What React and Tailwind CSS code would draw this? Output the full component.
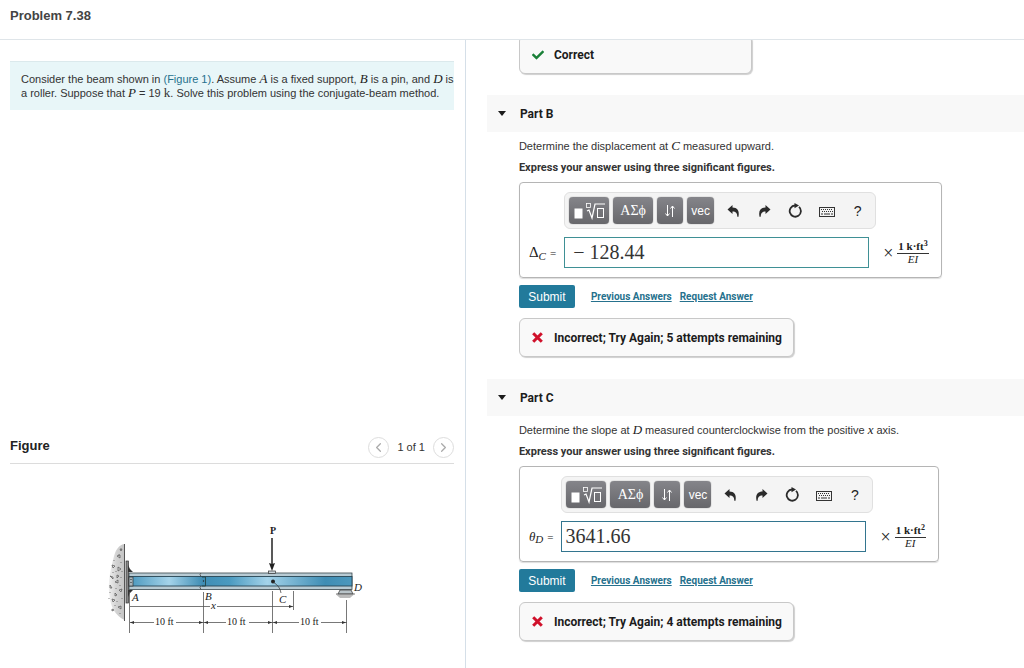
import { useState } from 'react';
import { ChevronLeft, ChevronRight } from 'lucide-react';
import { FaCheck } from 'react-icons/fa';

const parts = [
  {
    id: 'B',
    question: (
      <>Determine the displacement at <Sym>C</Sym> measured upward.</>
    ),
    symbol: 'Δ',
    sub: 'C',
    symbolStyle: 'text-[15px]',
    answer: ' − 128.44',
    power: 3,
    attempts: 5,
    field: 'border-[#3f9095]',
  },
  {
    id: 'C',
    question: (
      <>
        Determine the slope at <Sym>D</Sym> measured counterclockwise from the positive <Sym>x</Sym> axis.
      </>
    ),
    symbol: 'θ',
    sub: 'D',
    symbolStyle: 'text-[13px] italic',
    answer: '3641.66',
    power: 2,
    attempts: 4,
    field: 'border-[#33758f]',
  },
];

/* Inline math variable */
function Sym({ children }) {
  return <i className="font-['Liberation_Serif',serif] text-[13px] leading-none text-[#222]">{children}</i>;
}

function CrossIcon() {
  return (
    <svg className="mr-[11px] size-[11px]" viewBox="0 0 11 11" stroke="#d0112b" strokeWidth="3">
      <path d="M1.200 1.200l8.600 8.600M9.800 1.200L1.200 9.800" />
    </svg>
  );
}

function Feedback({ ok, children, className = '' }) {
  return (
    <div
      className={`flex h-[39px] items-center rounded-md border border-[#c8c8c8] bg-[#f9f9f9] pr-[11px] pl-3 font-['Roboto',sans-serif] text-xs font-bold text-[#1c1c1c] shadow-[1px_1px_1px_#cfcfcf] ${className}`}
    >
      {ok ? <FaCheck className="mr-[10px] size-3 text-[#1a8038]" /> : <CrossIcon />}
      {children}
    </div>
  );
}

function TemplateIcon() {
  return (
    <svg className="h-5 w-8" viewBox="0 0 32 20" fill="none" stroke="#fff">
      <rect x="1.500" y="7.500" width="8" height="10" fill="#fff" stroke="none" />
      <path d="M14 10l2-1 3 8 3-14h10" strokeWidth="1.200" />
      <rect x="13.500" y="2.500" width="4" height="4" strokeWidth="0.8" />
      <rect x="24.500" y="7.500" width="6" height="9" strokeWidth="1" />
    </svg>
  );
}

function UndoIcon({ flip }) {
  return (
    <svg className={flip ? 'h-3 w-[13px] -scale-x-100' : 'h-3 w-[13px]'} viewBox="0 0 13 12" fill="#2b2b2b">
      <path d="M0.500 4.500L5.500 0v2.500c4.500 0 7.300 3 6 9.200h-1.200C10.300 8 8.800 6.500 5.500 6.500V9z" />
    </svg>
  );
}

function ResetIcon() {
  return (
    <svg className="size-[15px]" viewBox="0 0 15 15" fill="none">
      <path d="M11 3.900A5.600 5.600 0 1 1 7 2.500" stroke="#2b2b2b" strokeWidth="1.800" />
      <path d="M6.500 0l4.500 2.500L6.500 5.300z" fill="#2b2b2b" />
    </svg>
  );
}

function KeyboardIcon() {
  return (
    <svg className="mt-0.5 h-[10px] w-4" viewBox="0 0 16 10" fill="none" stroke="#333">
      <rect x="0.500" y="0.500" width="15" height="9" />
      <path d="M2 2.500h12M3 4.500h11" strokeDasharray="1 1" />
      <path d="M2 7h2M5 7h6M12 7h2" />
    </svg>
  );
}

function Toolbar() {
  const dark =
    'flex h-[27px] items-center justify-center rounded bg-linear-to-b from-[#85858a] to-[#67676b] text-white shadow-[0_0_1px_#555]';
  const plain = 'flex w-[31px] items-center justify-center';
  return (
    <div className="col-span-2 col-start-2 flex h-[37px] w-[312px] items-center gap-1 rounded-md border border-[#e0e0e0] bg-[#f4f4f4] pl-1">
      <button type="button" aria-label="Templates" className={`${dark} w-10`}><TemplateIcon /></button>
      <button type="button" className={`${dark} w-10 font-['Liberation_Serif',serif] text-sm`}>ΑΣϕ</button>
      <button type="button" aria-label="Subscript and superscript" className={`${dark} w-[26px]`}>
        <svg className="h-3 w-[10px]" viewBox="0 0 10 12" fill="none" stroke="#fff">
          <path d="M2.500 0v11M0.500 8.500l2 2.500 2-2.500M7.500 12V1M5.500 3.500l2-2.500 2 2.500" />
        </svg>
      </button>
      <button type="button" className={`${dark} w-[27px] text-xs`}>vec</button>
      <div className="flex">
        <button type="button" aria-label="Undo" className={plain}><UndoIcon /></button>
        <button type="button" aria-label="Redo" className={plain}><UndoIcon flip /></button>
        <button type="button" aria-label="Reset" className={plain}><ResetIcon /></button>
        <button type="button" aria-label="Keyboard shortcuts" className={plain}><KeyboardIcon /></button>
        <button type="button" className={`${plain} text-sm text-[#222]`}>?</button>
      </div>
    </div>
  );
}

function Part({ part }) {
  const [answer, setAnswer] = useState(part.answer);
  const fieldId = `answer-${part.id}`;

  return (
    <section className="mb-[22px]">
      <h2 className="flex h-[37px] items-center bg-[#f8f8f8] font-['Roboto',sans-serif] text-xs font-bold text-[#1c1c1c]">
        <span className="mr-[14px] ml-[11px] border-x-4 border-t-5 border-x-transparent border-t-[#1c1c1c]" />
        Part {part.id}
      </h2>
      <div className="flex flex-col items-start pt-1 pl-8 text-[11px]">
        <p className="h-[21px] leading-[21px]">{part.question}</p>
        <p className="h-[21px] font-['Roboto',sans-serif] leading-[21px] font-bold">
          Express your answer using three significant figures.
        </p>

        <div className="mt-1 grid grid-cols-[auto_auto_auto] items-center gap-y-2 rounded-sm border border-[#b5b5b5] py-[9px] pr-3 pl-[9px] shadow-[0_1px_1px_#ddd]">
          <Toolbar />
          <label htmlFor={fieldId} className="pr-2 font-['Liberation_Serif',serif] leading-4 text-[#222]">
            <span className={part.symbolStyle}>{part.symbol}</span>
            <sub className="text-[11px] italic">{part.sub}</sub>
            <span className="ml-1 text-[11px]">=</span>
          </label>
          <input
            id={fieldId}
            value={answer}
            onChange={(e) => setAnswer(e.target.value)}
            className={`h-[31px] w-[305px] border bg-white px-[3px] font-['Liberation_Serif',serif] text-xl text-[#333] outline-none ${part.field}`}
          />
          <div className="flex items-center pl-[14px] font-['Liberation_Serif',serif] text-[11px] leading-[11px] text-[#222]">
            <span className="mr-1 text-lg">×</span>
            <span className="flex flex-col items-center font-bold">
              <span className="border-b border-[#333] px-px">
                1 k·ft<span className="relative -top-1 text-[8px]">{part.power}</span>
              </span>
              <i className="font-normal">EI</i>
            </span>
          </div>
        </div>

        <div className="mt-[7px] flex items-center text-[10px] font-bold text-[#26718d]">
          <button type="button" className="mr-4 h-[23px] w-14 rounded-xs bg-[#227a9b] text-xs font-normal text-white">Submit</button>
          <div className="flex gap-2 font-['Roboto',sans-serif]">
            <a href="#previous" className="underline">Previous Answers</a>
            <a href="#request" className="underline">Request Answer</a>
          </div>
        </div>

        <Feedback className="mt-[10px]">Incorrect; Try Again; {part.attempts} attempts remaining</Feedback>
      </div>
    </section>
  );
}

/* Beam ABCD: fixed at A, pin at B, load P at C, roller at D */
function BeamDiagram() {
  return (
    <svg className="ml-[90px] h-[125px] w-[270px]" viewBox="100 515 270 125" fill="none" role="img" aria-label="Beam diagram">
      <defs>
        <linearGradient id="steel">
          <stop offset="0" stopColor="#4896bc" />
          <stop offset="0.18" stopColor="#a4d3ea" />
          <stop offset="0.33" stopColor="#3f8db4" />
          <stop offset="0.45" stopColor="#4a9ac0" />
          <stop offset="0.62" stopColor="#a4d3ea" />
          <stop offset="0.88" stopColor="#3f8db4" />
          <stop offset="1" stopColor="#4c98bd" />
        </linearGradient>
        <linearGradient id="wall">
          <stop offset="0" stopColor="#f0f0f0" />
          <stop offset="0.5" stopColor="#d2d2d2" />
          <stop offset="1" stopColor="#c4c4c4" />
        </linearGradient>
      </defs>

      {/* wall */}
      <path d="M124.500 544c-6 1-9 6-11 14-3 12-6 24-4 38 1 11 6 20 15 24z" fill="url(#wall)" />
      <path d="M124.500 544v77" stroke="#555" />
      <g stroke="#555" strokeWidth="0.7">
        <path d="M117 556l3-1v3zM120 549h2l-1 2zM112 565l3 1-2 2zM118 567l3 2-3 2zM110 576l3 1v2zM115 582l3-2v3zM119 590l3-1-1 3zM110 585l2 3h-2zM112 599l3 1-2 2zM118 607l3-1v3zM112 609l2 1-2 1zM117 575l2 1-2 2zM115 593l2 2-2 1z" />
        <path d="M114 560v1M121 562v1M116 571v1M121 577v1M113 572v1M110 592v1M120 585v1M117 601v1M122 598v1M115 605v1M120 613v1M116 588v1M109 598v1M119 554v1M122 571v1" />
      </g>

      {/* beam */}
      <rect x="129" y="573" width="223" height="16.500" fill="#b8cbd4" stroke="#39464c" strokeWidth="0.8" />
      <rect x="129" y="576.500" width="223" height="9.500" fill="url(#steel)" stroke="#284654" strokeWidth="0.9" />
      <rect x="126" y="561" width="2.500" height="42" fill="#888" stroke="#333" strokeWidth="0.7" />
      <path d="M128 565l2 4 3 3h-5zM128 597l2-4 3-3h-5z" fill="#333" />
      <rect x="129" y="577" width="4" height="9" fill="#a9b6bc" stroke="#333" strokeWidth="0.7" />
      <path d="M131 579v1M131 582v1" stroke="#222" />
      <path d="M201 573l-1 1.500 1 2M201 586l-1 1.500 1 2" stroke="#444" strokeWidth="0.8" />
      <path d="M202 577h3.500v9H202" stroke="#244" strokeWidth="0.9" />
      <circle cx="203.500" cy="581" r="0.7" fill="#222" />

      {/* roller support */}
      <path d="M340 590h11l2 4h-15z" fill="#b9c4c9" stroke="#444" strokeWidth="0.8" />
      <path d="M336 594.500h18l-4 3.500h-10z" fill="#bbb" />
      <path d="M336 594h19" stroke="#555" strokeWidth="0.8" />

      {/* load P */}
      <rect x="268.500" y="571" width="7" height="2.500" fill="#ccd5da" stroke="#333" strokeWidth="0.7" />
      <path d="M272 538v27" stroke="#222" strokeWidth="1.500" />
      <path d="M269 563l3 8 3-8-3 1z" fill="#222" />
      <circle cx="273" cy="581.500" r="2" fill="#222" />
      <path d="M273 582q7 4 8 11" stroke="#333" strokeWidth="0.7" />

      {/* dimensions */}
      <g stroke="#555" strokeWidth="0.8">
        <path d="M129.500 592v41M203.500 592v41M272.500 591v42M346.500 600v33M293.500 591v19" />
        <path d="M130 606.500h80M217 606.500h76M130 622.500h24M176 622.500h50M249 622.500h50M321 622.500h26" />
      </g>
      <path
        d="M130 622.500l4-1.500v3zM203 622.500l-4-1.500v3zM204 622.500l4-1.500v3zM272 622.500l-4-1.500v3zM273 622.500l4-1.500v3zM346 622.500l-4-1.500v3zM293 606.500l-4-1.500v3z"
        fill="#333"
      />

      <g className="font-['Liberation_Serif',serif] text-[10px]" fill="#222">
        <text x="270" y="534" className="font-bold">P</text>
        <g className="text-[11px] italic">
          <text x="132" y="601">A</text>
          <text x="205" y="600">B</text>
          <text x="279" y="603">C</text>
          <text x="354" y="591">D</text>
          <text x="211" y="609">x</text>
        </g>
        <text x="155" y="625">10 ft</text>
        <text x="227" y="625">10 ft</text>
        <text x="300" y="625">10 ft</text>
      </g>
    </svg>
  );
}

export default function App() {
  const pager = 'flex size-[21px] items-center justify-center rounded-full border border-[#ddd] text-[#aaa]';
  return (
    <div className="flex min-h-screen flex-col bg-white font-['Liberation_Sans',Arial,sans-serif] text-[#333]">
      <header className="flex h-10 items-center border-b border-[#dfe5e9] px-[10px] pb-2">
        <h1 className="text-[13px] font-bold text-[#444]">Problem 7.38</h1>
      </header>

      <main className="flex flex-1">
        <div className="flex w-[45.5%] flex-col border-r border-[#d5dfe8] pt-[21px] pr-[11px] pl-[10px]">
          <p className="border-t border-[#dbe9ec] bg-[#e8f6f8] py-[10px] pl-[11px] text-[11px] leading-[13px]">
            Consider the beam shown in <a href="#figure" className="text-[#26718d]">(Figure 1)</a>. Assume <Sym>A</Sym> is a fixed
            support, <Sym>B</Sym> is a pin, and <Sym>D</Sym> is a roller. Suppose that <Sym>P</Sym> = 19{' '}
            <span className="font-['Liberation_Serif',serif] text-[13px] leading-none">k</span>. Solve this problem using the
            conjugate-beam method.
          </p>

          <section id="figure" className="mt-auto">
            <div className="flex items-center border-b border-[#dcdcdc] pb-1 text-[11px]">
              <h2 className="mr-auto mb-1 text-[13px] font-bold text-[#222]">Figure</h2>
              <button type="button" aria-label="Previous figure" className={pager}><ChevronLeft size={15} /></button>
              <span className="mx-2">1 of 1</span>
              <button type="button" aria-label="Next figure" className={pager}><ChevronRight size={15} /></button>
            </div>
            <div className="pt-[51px] pb-7">
              <BeamDiagram />
            </div>
          </section>
        </div>

        <div className="flex-1 overflow-hidden pl-[21px]">
          <div className="-mt-[5px] mb-[21px] pl-8">
            <Feedback ok className="w-[233px]">Correct</Feedback>
          </div>
          {parts.map((part) => (
            <Part key={part.id} part={part} />
          ))}
        </div>
      </main>
    </div>
  );
}
